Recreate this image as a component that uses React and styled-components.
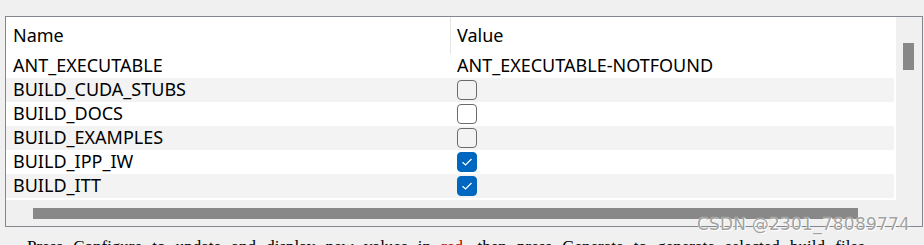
import React from 'react';
import styled, { createGlobalStyle } from 'styled-components';

const GlobalStyle = createGlobalStyle`
  html, body {
    margin: 0;
    padding: 0;
    background: #f0f0f0;
    overflow: hidden;
  }
  body {
    font-family: "Noto Sans", "Liberation Sans", sans-serif;
  }
`;

const Page = styled.div`
  position: relative;
  width: 924px;
  height: 245px;
  padding: 16px 0 0 5px;
  box-sizing: border-box;
  overflow: hidden;
`;

const Frame = styled.div`
  width: 918px;
  height: 211px;
  box-sizing: border-box;
  border: 1px solid #828790;
  display: grid;
  grid-template-columns: 890px 26px;
  grid-template-rows: 183px 26px;
  background: #f0f0f0;
`;

const Viewport = styled.div`
  background: #fff;
  overflow: hidden;
  display: flex;
  flex-direction: column;
`;

const Row = styled.div`
  display: grid;
  grid-template-columns: 444px 1fr;
  height: ${p => (p.$header ? 37 : 24)}px;
  width: 888px;
  background: ${p => (p.$alt ? '#f3f3f3' : '#fff')};
  font-size: 18px;
  color: #000;
  flex-shrink: 0;
`;

const Cell = styled.div`
  display: flex;
  align-items: ${p => (p.$header ? 'flex-end' : 'center')};
  padding-left: ${p => (p.$value ? (p.$divider ? 6 : 7) : 7)}px;
  padding-bottom: ${p => (p.$header ? 8 : 2)}px;
  border-left: ${p => (p.$divider ? '1px solid #e5e5e5' : 'none')};
  white-space: nowrap;
  line-height: 22px;
`;

const Box = styled.div`
  width: 20px;
  height: 20px;
  box-sizing: border-box;
  border-radius: 4px;
  margin-top: 2px;
  border: 1px solid ${p => (p.$checked ? '#0067c0' : '#6b6b6b')};
  background: ${p => (p.$checked ? '#0067c0' : 'transparent')};
  display: flex;
  align-items: center;
  justify-content: center;
`;

const VTrack = styled.div`
  background: #f0f0f0;
  padding: 26px 0 0 7px;
`;

const VThumb = styled.div`
  width: 11px;
  height: 27px;
  background: #888;
`;

const HTrack = styled.div`
  background: #f0f0f0;
  padding: 8px 0 0 27px;
`;

const HThumb = styled.div`
  width: 825px;
  height: 11px;
  background: #888;
`;

const Corner = styled.div`
  background: #f0f0f0;
`;

const Watermark = styled.div`
  position: absolute;
  left: 697px;
  top: 214px;
  font-family: "DejaVu Sans", "Liberation Sans", sans-serif;
  font-size: 17px;
  letter-spacing: 0.2px;
  color: rgba(150, 150, 150, 0.9);
  text-shadow: 0 0 1px #fff, 1px 1px 0 #fff;
`;

const Caption = styled.div`
  position: absolute;
  left: 27px;
  top: 237px;
  font-family: "Liberation Serif", serif;
  font-size: 17px;
  color: #000;
  white-space: nowrap;
  word-spacing: 6px;
`;

const Red = styled.span`
  color: #c00000;
`;

const Check = () => (
  <svg width="12" height="10" viewBox="0 0 12 10">
    <path d="M1.5 5.2 L4.5 8 L10.5 2" fill="none" stroke="#fff" strokeWidth="1.2" />
  </svg>
);

const rows = [
  { name: 'ANT_EXECUTABLE', value: 'ANT_EXECUTABLE-NOTFOUND' },
  { name: 'BUILD_CUDA_STUBS', check: false },
  { name: 'BUILD_DOCS', check: false },
  { name: 'BUILD_EXAMPLES', check: false },
  { name: 'BUILD_IPP_IW', check: true },
  { name: 'BUILD_ITT', check: true },
];

const App = () => {
  return (
    <>
      <GlobalStyle />
      <Page>
        <Frame>
          <Viewport>
            <Row $header>
              <Cell $header>Name</Cell>
              <Cell $header $value $divider>Value</Cell>
            </Row>
            {rows.map((r, i) => (
              <Row key={r.name} $alt={i % 2 === 1}>
                <Cell>{r.name}</Cell>
                <Cell $value>
                  {r.value ? r.value : (
                    <Box $checked={r.check}>{r.check && <Check />}</Box>
                  )}
                </Cell>
              </Row>
            ))}
          </Viewport>
          <VTrack>
            <VThumb />
          </VTrack>
          <HTrack>
            <HThumb />
          </HTrack>
          <Corner />
        </Frame>
        <Watermark>CSDN @2301_78089774</Watermark>
        <Caption>
          Press Configure to update and display new values in <Red>red</Red>, then press Generate to generate selected build files.
        </Caption>
      </Page>
    </>
  );
};

export default App;
